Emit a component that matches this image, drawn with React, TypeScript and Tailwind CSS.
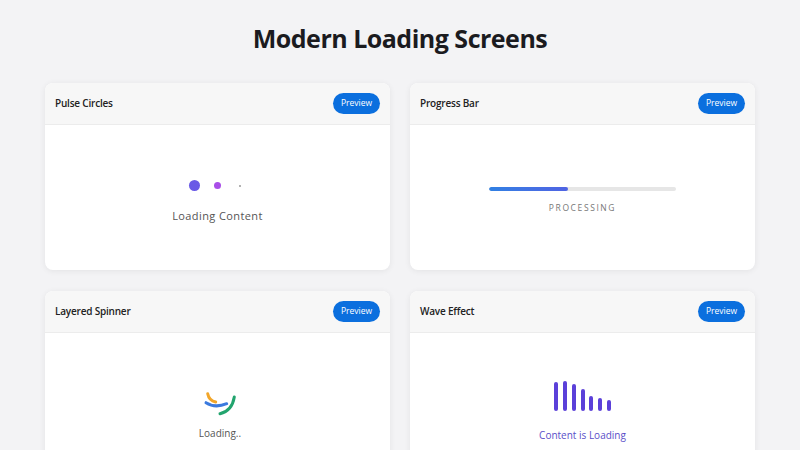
import React from "react";

const font = { fontFamily: '"Open Sans", "Noto Sans", sans-serif' };

function Card({ title, children }: { title: string; children: React.ReactNode }) {
  return (
    <div className="rounded-lg bg-white shadow-[0_1px_6px_rgba(0,0,0,0.07)] overflow-hidden">
      <div className="flex items-center justify-between h-[42px] px-[10px] bg-[#f7f7f7] border-b border-[#ececec]">
        <span className="text-[10px] tracking-[-0.2px] font-semibold text-[#222]">{title}</span>
        <button className="h-[21px] w-[47px] rounded-full bg-[#0b6fde] text-white text-[8.5px]">
          Preview
        </button>
      </div>
      <div className="h-[145px] flex flex-col items-center justify-center">{children}</div>
    </div>
  );
}

export default function App() {
  const bars = [29, 30, 27, 22, 15, 13, 11];

  return (
    <div className="min-h-screen bg-[#f3f3f5] px-[45px] pt-[19px]" style={font}>
      <h1 className="text-center text-[25px] tracking-[-0.5px] leading-[38px] font-bold text-[#1b1b1f]">
        Modern Loading Screens
      </h1>

      <div className="mt-[26px] grid grid-cols-2 gap-x-5 gap-y-[21px]">
        {/* Pulse */}
        <Card title="Pulse Circles">
          <div className="flex items-center h-[12px] mt-[9px] mr-[5px]">
            <div className="w-[11px] h-[11px] rounded-full bg-[#6a5ae6]" />
            <div className="ml-[14px] w-[7px] h-[7px] rounded-full bg-[#a94ee8]" />
            <div className="ml-[18px] w-[2px] h-[2px] rounded-full bg-[#999]" />
          </div>
          <div className="mt-[16px] text-[11px] tracking-[0.4px] text-[#555]">Loading Content</div>
        </Card>

        {/* Progress */}
        <Card title="Progress Bar">
          <div className="mt-[7px] w-[187px] h-[4px] rounded-full bg-[#e6e6e6] overflow-hidden">
            <div className="h-full w-[42%] rounded-full bg-gradient-to-r from-[#2f80e3] to-[#4f63e3]" />
          </div>
          <div className="mt-[11px] text-[8.5px] tracking-[1.6px] text-[#777]">PROCESSING</div>
        </Card>

        {/* Spinner */}
        <Card title="Layered Spinner">
          <div className="flex flex-col items-center ml-[5px]">
            <svg width="40" height="40" viewBox="0 0 40 40" className="mt-[14px]">
              <path d="M7.7 9.7 Q9 16.5 15.7 18" fill="none" stroke="#f2a62a" strokeWidth="3" strokeLinecap="round" />
              <path d="M6 18.7 Q15 24.5 26.7 19.7" fill="none" stroke="#3b7ade" strokeWidth="3" strokeLinecap="round" />
              <path d="M34.3 13 Q32 27 20 29.7" fill="none" stroke="#22a46e" strokeWidth="3" strokeLinecap="round" />
            </svg>
            <div className="mt-[2px] text-[10px] text-[#555]">Loading..</div>
          </div>
        </Card>

        {/* Wave */}
        <Card title="Wave Effect">
          <div className="flex items-end gap-[4.7px] h-[31px] mt-[11px]">
            {bars.map((h, i) => (
              <div key={i} className="w-[4px] rounded-full bg-[#5b40d9]" style={{ height: h }} />
            ))}
          </div>
          <div className="mt-[17px] text-[10px] text-[#5a4ec9]">Content is Loading</div>
        </Card>
      </div>
    </div>
  );
}
